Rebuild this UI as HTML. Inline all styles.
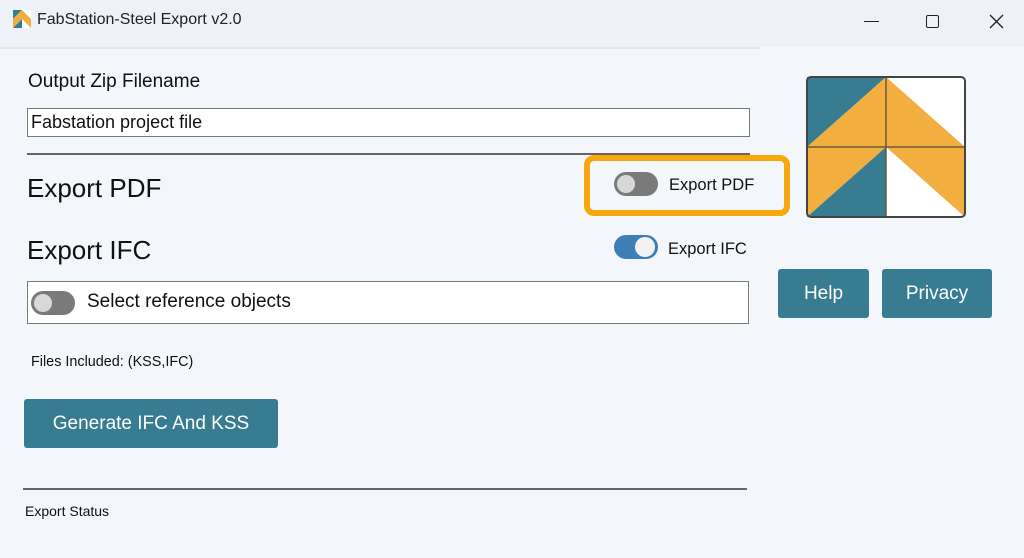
<!DOCTYPE html>
<html><head><meta charset="utf-8"><style>
*{margin:0;padding:0;box-sizing:border-box}
body{width:1024px;height:558px;background:#f3f6fb;font-family:"Liberation Sans",Arial,sans-serif;color:#111;position:relative;overflow:hidden}
.a{position:absolute}
.tb{left:0;top:0;width:1024px;height:47px;background:#eef2f8}
.inp{background:#fff;border:1px solid #7a7a7a}
.tg{width:44px;height:24px;border-radius:12px}
.btn{background:#377c91;color:#fff;border-radius:3px;display:flex;align-items:center;justify-content:center;font-size:19px}
</style></head><body>
<div class="a tb"></div>
<div class="a" style="left:0;top:47px;width:760px;height:2px;background:#e2e7ef"></div>
<svg class="a" style="left:13px;top:10px" width="18" height="18" viewBox="0 0 18 18"><rect width="18" height="18" fill="#fff"/><polygon points="0,0 9,0 0,9" fill="#377c91"/><polygon points="9,0 18,9 18,18 9,9 0,18 0,9" fill="#f2ae3f"/><polygon points="9,9 0,18 9,18" fill="#377c91"/></svg>
<div class="a" style="left:37px;top:11px;font-size:16px;color:#222">FabStation-Steel Export v2.0</div>
<div class="a" style="left:864px;top:21px;width:15px;height:1px;background:#222"></div>
<div class="a" style="left:926px;top:15px;width:13px;height:13px;border:1.3px solid #222;border-radius:2px"></div>
<svg class="a" style="left:989px;top:14px" width="15" height="15"><path d="M1 1L14 14M14 1L1 14" stroke="#222" stroke-width="1.3"/></svg>

<div class="a" style="left:28px;top:71px;font-size:19px">Output Zip Filename</div>
<div class="a inp" style="left:27px;top:108px;width:723px;height:29px;font-size:18px;padding:3px 0 0 3px">Fabstation project file</div>
<div class="a" style="left:27px;top:153px;width:723px;height:2px;background:#666"></div>
<div class="a" style="left:27px;top:173px;font-size:26px">Export PDF</div>
<div class="a" style="left:584px;top:155px;width:206px;height:61px;border:6px solid #f6a80c;border-radius:10px"></div>
<div class="a tg" style="left:614px;top:172px;background:#7a7a7a"><div class="a" style="left:3px;top:3px;width:18px;height:18px;border-radius:50%;background:#d8d8d8"></div></div>
<div class="a" style="left:669px;top:176px;font-size:16.5px">Export PDF</div>
<div class="a" style="left:27px;top:235px;font-size:26px">Export IFC</div>
<div class="a tg" style="left:614px;top:235px;background:#3f7fb8"><div class="a" style="left:21px;top:2px;width:20px;height:20px;border-radius:50%;background:#f2f2f2"></div></div>
<div class="a" style="left:668px;top:240px;font-size:16.5px">Export IFC</div>
<div class="a inp" style="left:27px;top:281px;width:722px;height:43px"></div>
<div class="a tg" style="left:31px;top:291px;background:#7a7a7a"><div class="a" style="left:3px;top:3px;width:18px;height:18px;border-radius:50%;background:#d8d8d8"></div></div>
<div class="a" style="left:87px;top:291px;font-size:19px">Select reference objects</div>
<div class="a" style="left:31px;top:354px;font-size:14.4px">Files Included: (KSS,IFC)</div>
<div class="a btn" style="left:24px;top:399px;width:254px;height:49px">Generate IFC And KSS</div>
<div class="a" style="left:23px;top:488px;width:724px;height:2px;background:#666"></div>
<div class="a" style="left:25px;top:503px;font-size:14px">Export Status</div>

<svg class="a" style="left:806px;top:76px" width="160" height="142" viewBox="806 76 160 142">
<rect x="807" y="77" width="158" height="140" rx="4" fill="#fff"/>
<polygon points="807,77 886,77 807,147" fill="#377c91"/>
<polygon points="886,77 807,147 886,147" fill="#f2ae3f"/>
<polygon points="886,77 965,147 886,147" fill="#f2ae3f"/>
<polygon points="807,147 886,147 807,217" fill="#f2ae3f"/>
<polygon points="886,147 807,217 886,217" fill="#377c91"/>
<polygon points="886,147 965,147 965,217" fill="#f2ae3f"/>
<path d="M886 77V217M807 147H965" stroke="#6b5a3c" stroke-width="1.5"/>
<rect x="807" y="77" width="158" height="140" rx="4" fill="none" stroke="#444" stroke-width="2"/>
</svg>
<div class="a btn" style="left:778px;top:269px;width:91px;height:49px">Help</div>
<div class="a btn" style="left:882px;top:269px;width:110px;height:49px">Privacy</div>
</body></html>
